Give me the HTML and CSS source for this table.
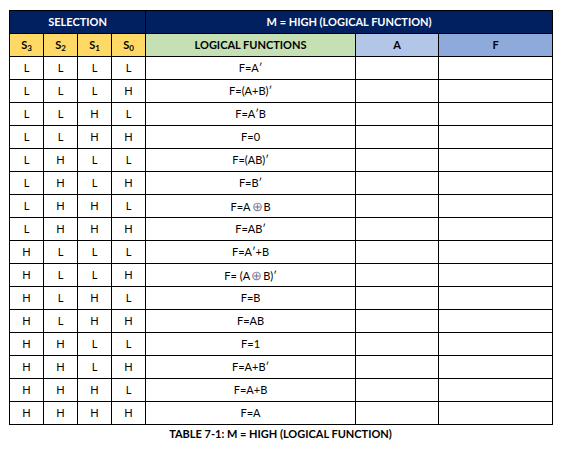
FILE: index.html
```html
<!DOCTYPE html>
<html>
<head>
<meta charset="utf-8">
<link rel="stylesheet" href="styles.css">
</head>
<body>
<div class="wrap">
<table class="tbl">
  <colgroup>
    <col class="c-s"><col class="c-s"><col class="c-s"><col class="c-s">
    <col class="c-fn"><col class="c-a"><col class="c-f">
  </colgroup>
  <tr class="h1">
    <th colspan="4">SELECTION</th>
    <th colspan="3">M = HIGH (LOGICAL FUNCTION)</th>
  </tr>
  <tr class="h2">
    <th class="ys">S<sub>3</sub></th>
    <th class="ys">S<sub>2</sub></th>
    <th class="ys">S<sub>1</sub></th>
    <th class="ys">S<sub>0</sub></th>
    <th class="gr">LOGICAL FUNCTIONS</th>
    <th class="la">A</th>
    <th class="lf">F</th>
  </tr>
  <tr><td>L</td><td>L</td><td>L</td><td>L</td><td>F=A′</td><td></td><td></td></tr>
  <tr><td>L</td><td>L</td><td>L</td><td>H</td><td>F=(A+B)′</td><td></td><td></td></tr>
  <tr><td>L</td><td>L</td><td>H</td><td>L</td><td>F=A′B</td><td></td><td></td></tr>
  <tr><td>L</td><td>L</td><td>H</td><td>H</td><td>F=0</td><td></td><td></td></tr>
  <tr><td>L</td><td>H</td><td>L</td><td>L</td><td>F=(AB)′</td><td></td><td></td></tr>
  <tr><td>L</td><td>H</td><td>L</td><td>H</td><td>F=B′</td><td></td><td></td></tr>
  <tr><td>L</td><td>H</td><td>H</td><td>L</td><td>F=A<span class="xor">⊕</span>B</td><td></td><td></td></tr>
  <tr><td>L</td><td>H</td><td>H</td><td>H</td><td>F=AB′</td><td></td><td></td></tr>
  <tr><td>H</td><td>L</td><td>L</td><td>L</td><td>F=A′+B</td><td></td><td></td></tr>
  <tr><td>H</td><td>L</td><td>L</td><td>H</td><td>F= (A<span class="xor">⊕</span>B)′</td><td></td><td></td></tr>
  <tr><td>H</td><td>L</td><td>H</td><td>L</td><td>F=B</td><td></td><td></td></tr>
  <tr><td>H</td><td>L</td><td>H</td><td>H</td><td>F=AB</td><td></td><td></td></tr>
  <tr><td>H</td><td>H</td><td>L</td><td>L</td><td>F=1</td><td></td><td></td></tr>
  <tr><td>H</td><td>H</td><td>L</td><td>H</td><td>F=A+B′</td><td></td><td></td></tr>
  <tr><td>H</td><td>H</td><td>H</td><td>L</td><td>F=A+B</td><td></td><td></td></tr>
  <tr><td>H</td><td>H</td><td>H</td><td>H</td><td>F=A</td><td></td><td></td></tr>
</table>
<div class="caption">TABLE 7-1: M = HIGH (LOGICAL FUNCTION)</div>
</div>
</body>
</html>
```
FILE: styles.css
```css
html, body {
  margin: 0;
  padding: 0;
  background: #ffffff;
}
body {
  font-family: Lato, "Liberation Sans", sans-serif;
  font-size: 11px;
  color: #000;
}
.wrap {
  padding: 10px 0 0 9px;
  width: 543px;
}
.tbl {
  border-collapse: collapse;
  table-layout: fixed;
  width: 543px;
}
.c-s { width: 34px; }
.c-fn { width: 210px; }
.c-a { width: 83px; }
.c-f { width: 114px; }
.tbl tr {
  height: 23px;
}
.tbl th, .tbl td {
  border: 1px solid #000;
  padding: 0;
  text-align: center;
  vertical-align: middle;
  line-height: 12px;
}
.tbl td { font-weight: 400; }
.h1 th {
  background: #002060;
  color: #fff;
  font-weight: 700;
}
.h2 th {
  font-weight: 700;
  color: #000;
}
.ys { background: #ffd966; }
.gr { background: #c5e0b3; }
.la { background: #b4c6e7; }
.lf { background: #8eaadb; }
sub {
  font-size: 8px;
  vertical-align: -2px;
  line-height: 0;
}
.xor {
  color: #7b7b9a;
  font-size: 13px;
  margin: 0 1px;
}
.caption {
  text-align: center;
  font-weight: 700;
  font-size: 11px;
  margin-top: 2px;
  line-height: 14px;
}
```
